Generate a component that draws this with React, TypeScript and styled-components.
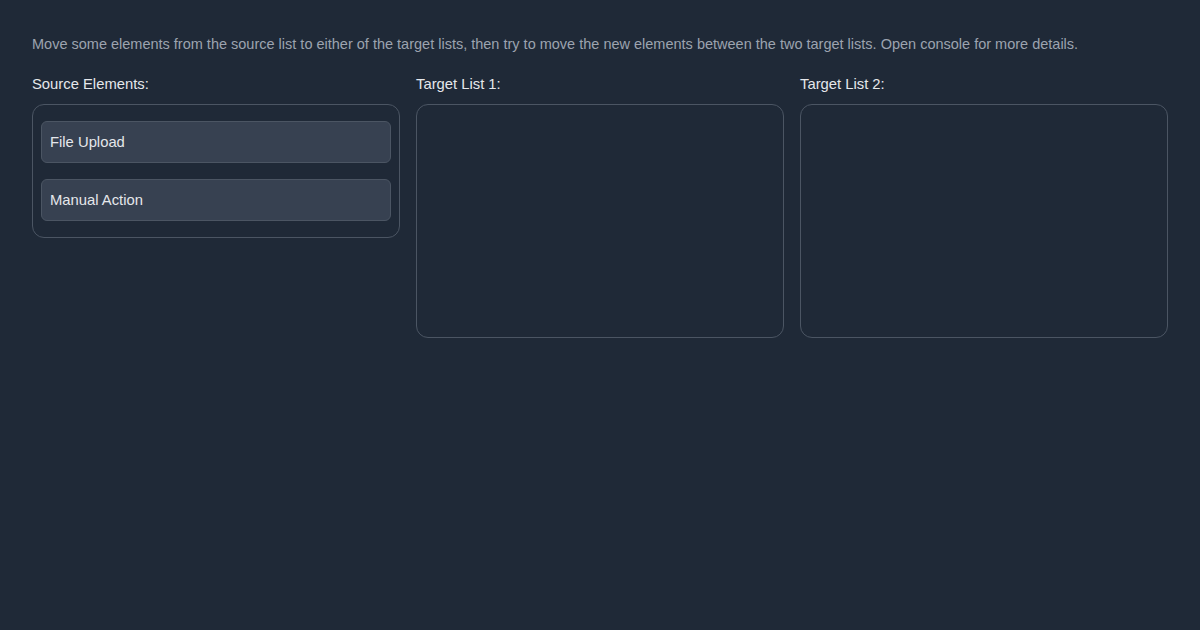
import * as React from 'react'
import styled, { createGlobalStyle } from 'styled-components'

const GlobalStyle = createGlobalStyle`
  html, body {
    margin: 0;
    padding: 0;
    background: #1f2937;
    font-family: "Liberation Sans", Arial, sans-serif;
  }
`

const Page = styled.div`
  min-height: 630px;
  box-sizing: border-box;
  padding: 32px;
  background: #1f2937;
`

const Description = styled.p`
  margin: 0 0 16px;
  font-size: 14.5px;
  line-height: 24px;
  color: #9ca3af;
`

const Columns = styled.div`
  display: grid;
  grid-template-columns: repeat(3, 1fr);
  gap: 16px;
  align-items: start;
`

const Column = styled.div`
  display: flex;
  flex-direction: column;
`

const Label = styled.div`
  font-size: 14.8px;
  line-height: 24px;
  color: #e5e7eb;
  margin-bottom: 8px;
`

const ListBox = styled.div<{ $empty?: boolean }>`
  display: flex;
  flex-direction: column;
  gap: 16px;
  padding: 16px 8px;
  border: 1px solid #4b5563;
  border-radius: 12px;
  min-height: ${p => (p.$empty ? '200px' : '0')};
`

const Item = styled.div`
  padding: 8px;
  font-size: 14.8px;
  line-height: 24px;
  color: #e5e7eb;
  background: #374151;
  border: 1px solid #4b5563;
  border-radius: 6px;
  cursor: grab;
`

const lists: { title: string; items: string[] }[] = [
  { title: 'Source Elements:', items: ['File Upload', 'Manual Action'] },
  { title: 'Target List 1:', items: [] },
  { title: 'Target List 2:', items: [] },
]

const App: React.FC = () => (
  <Page>
    <GlobalStyle />
    <Description>
      Move some elements from the source list to either of the target lists, then try to move the new elements
      between the two target lists. Open console for more details.
    </Description>
    <Columns>
      {lists.map(list => (
        <Column key={list.title}>
          <Label>{list.title}</Label>
          <ListBox $empty={list.items.length === 0}>
            {list.items.map(item => (
              <Item key={item}>{item}</Item>
            ))}
          </ListBox>
        </Column>
      ))}
    </Columns>
  </Page>
)

export default App
